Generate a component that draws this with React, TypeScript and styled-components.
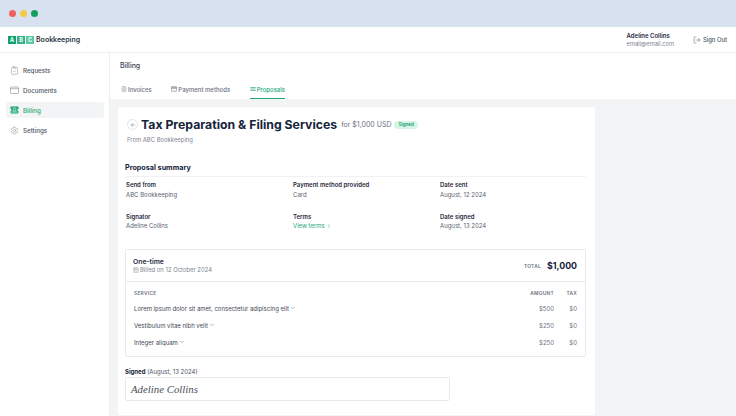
import React from 'react';
import styled, { createGlobalStyle } from 'styled-components';
import { ArrowLeft, ChevronDown, ChevronRight, ClipboardCheck, CalendarDays, FileText, LogOut, Settings } from 'lucide-react';

const Global = createGlobalStyle`
    html, body { margin:0; padding:0; background:#fff; }
    body { font-family:Inter, "Liberation Sans", sans-serif; color:#1f2a3c; width:736px; height:416px; overflow:hidden; }
`

const Page = styled.div`
    width:736px;
    height:416px;
    display:flex;
    flex-direction:column;
    overflow:hidden;
`

const TitleBar = styled.div`
    height:27px;
    flex:none;
    background:#d8e1ef;
    display:flex;
    align-items:center;
    gap:4px;
    padding:0 0 0 9px;
    box-sizing:border-box;
`

const Dot = styled.span<{ $color: string }>`
    width:7px;
    height:7px;
    border-radius:50%;
    background:${props => props.$color};
`

const Header = styled.header`
    height:26px;
    flex:none;
    display:flex;
    align-items:center;
    border-bottom:1px solid #eceef0;
    padding:0 9px 0 8px;
    box-sizing:border-box;
`

const Logo = styled.div`
    display:flex;
    align-items:center;
    gap:2px;
    font-size:7px;
    font-weight:600;
    color:#2a3546;
    flex:1;
`

const LogoLetters = styled.div`
    display:flex;
    gap:1px;
`

const LogoLetter = styled.span<{ $color: string }>`
    width:8px;
    height:8px;
    background:${props => props.$color};
    color:#fff;
    font-size:5.5px;
    font-weight:700;
    display:flex;
    align-items:center;
    justify-content:center;
`

const User = styled.div`
    display:flex;
    flex-direction:column;
    font-size:6px;
    line-height:8px;
    margin-right:19px;
`

const UserName = styled.span`
    font-weight:600;
    color:#1f2a3c;
`

const UserMail = styled.span`
    font-size:5.7px;
    color:#7d8590;
`

const SignOut = styled.div`
    display:flex;
    align-items:center;
    gap:2px;
    font-size:5.9px;
    font-weight:500;
    color:#4b5563;
`

const Body = styled.div`
    flex:1;
    display:flex;
    min-height:0;
`

const Sidebar = styled.nav`
    width:110px;
    flex:none;
    border-right:1px solid #eceef0;
    box-sizing:border-box;
    padding:9px 5px 0 6px;
    display:flex;
    flex-direction:column;
    gap:4px;
`

const NavItem = styled.div<{ $active?: boolean }>`
    height:16px;
    display:flex;
    align-items:center;
    gap:4px;
    padding:0 4px;
    border-radius:3px;
    font-size:6.2px;
    font-weight:500;
    color:${props => props.$active ? '#1fa874' : '#4b5563'};
    background:${props => props.$active ? '#f3f4f5' : 'transparent'};
`

const Main = styled.main`
    flex:1;
    display:flex;
    flex-direction:column;
    min-width:0;
`

const MainTop = styled.div`
    height:46px;
    flex:none;
    box-sizing:border-box;
    padding:8px 0 0 10px;
    display:flex;
    flex-direction:column;
`

const PageTitle = styled.div`
    font-size:7px;
    font-weight:500;
    line-height:10px;
    color:#374151;
`

const Tabs = styled.div`
    display:flex;
    gap:19.5px;
    margin-top:auto;
    padding-left:1px;
`

const Tab = styled.div<{ $active?: boolean }>`
    height:18px;
    display:flex;
    align-items:center;
    gap:1px;
    padding-bottom:1px;
    box-sizing:border-box;
    font-size:6px;
    font-weight:500;
    color:${props => props.$active ? '#22a87a' : '#6b7280'};
    border-bottom:1px solid ${props => props.$active ? '#22a87a' : 'transparent'};
`

const Content = styled.div`
    flex:1;
    background:#f3f4f5;
    padding:8px 8px 0;
    min-height:0;
`

const Card = styled.section`
    width:477px;
    height:308px;
    box-sizing:border-box;
    background:#fff;
    border-radius:2px;
    padding:9px 9px 0 7px;
`

const TitleRow = styled.div`
    display:flex;
    align-items:center;
    padding-left:2px;
`

const BackButton = styled.span`
    width:11px;
    height:11px;
    border-radius:50%;
    border:1px solid #e3e5e8;
    box-sizing:border-box;
    display:flex;
    align-items:center;
    justify-content:center;
    color:#4b5563;
    margin-right:3px;
`

const Title = styled.h1`
    margin:0;
    font-size:12.25px;
    line-height:17px;
    font-weight:700;
    color:#15243a;
`

const Price = styled.span`
    font-size:7px;
    color:#6b7280;
    margin-left:4px;
`

const Badge = styled.span`
    margin-left:3px;
    height:8px;
    padding:0 4px;
    border-radius:4px;
    background:#d6f5e6;
    color:#16a06c;
    font-size:4.6px;
    font-weight:600;
    display:flex;
    align-items:center;
`

const From = styled.div`
    margin-top:3px;
    font-size:5.9px;
    line-height:8px;
    color:#7d8590;
    padding-left:2px;
`

const SectionTitle = styled.h2`
    margin:19px 0 0;
    font-size:7.2px;
    line-height:10px;
    font-weight:700;
    color:#15243a;
    padding-bottom:3px;
    border-bottom:1px solid #f0f1f3;
`

const Summary = styled.div`
    display:grid;
    grid-template-columns:167px 147px 1fr;
    row-gap:14px;
    padding:4px 0 0 1px;
`

const Field = styled.div`
    display:flex;
    flex-direction:column;
    gap:1.5px;
    font-size:6px;
    line-height:8px;
`

const FieldLabel = styled.span`
    font-weight:600;
    color:#1f2a3c;
`

const FieldValue = styled.span<{ $link?: boolean }>`
    color:${props => props.$link ? '#22a87a' : '#5b6470'};
    display:flex;
    align-items:center;
    gap:1px;
`

const Box = styled.div`
    margin-top:19px;
    width:461px;
    height:108px;
    box-sizing:border-box;
    border:1px solid #e8eaed;
    border-radius:2px;
`

const BoxHead = styled.div`
    height:32px;
    box-sizing:border-box;
    border-bottom:1px solid #e8eaed;
    padding:0 8px 0 7px;
    display:flex;
    align-items:center;
    justify-content:space-between;
`

const BoxName = styled.div`
    font-size:6.8px;
    line-height:9px;
    font-weight:600;
    color:#1f2a3c;
`

const BoxDate = styled.div`
    font-size:5.9px;
    line-height:8px;
    color:#7d8590;
    display:flex;
    align-items:center;
    gap:1px;
`

const Total = styled.div`
    display:flex;
    align-items:center;
    gap:6px;
`

const TotalLabel = styled.span`
    font-size:4.8px;
    letter-spacing:0.3px;
    font-weight:600;
    color:#6b7280;
`

const TotalValue = styled.span`
    font-size:8.8px;
    font-weight:700;
    color:#15243a;
`

const Table = styled.div`
    padding:7px 8px 0;
`

const Row = styled.div`
    display:grid;
    grid-template-columns:1fr 40px 23px;
    align-items:center;
    height:17px;
    font-size:6px;
    color:#3f4854;
`

const HeadRow = styled(Row)`
    height:8px;
    margin-bottom:2.5px;
    font-size:4.8px;
    letter-spacing:0.3px;
    font-weight:600;
    color:#6b7280;
`

const Service = styled.span`
    display:flex;
    align-items:center;
    gap:1px;
`

const Cell = styled.span`
    text-align:right;
    color:#6b7280;
`

const SignedLabel = styled.div`
    margin-top:11px;
    font-size:6px;
    line-height:8px;
    color:#4b5563;
    & b { font-weight:700; color:#15243a; }
`

const SignatureBox = styled.div`
    margin-top:1px;
    width:325px;
    height:24px;
    box-sizing:border-box;
    border:1px solid #e8eaed;
    border-radius:2px;
    padding-left:5px;
    display:flex;
    align-items:center;
    font-family:"Liberation Serif", serif;
    font-style:italic;
    font-size:10.8px;
    color:#4a4f58;
`

// the green ticket shaped icon of the active nav item
const BillingIcon = () => (
    <svg width="9" height="8" viewBox="0 0 18 16">
        <path d="M1 1h16v5a2 2 0 0 0 0 4v3a2 2 0 0 1-2 2H3a2 2 0 0 1-2-2v-3a2 2 0 0 0 0-4z" fill="#1fa874" />
        <circle cx="9" cy="7" r="3" fill="none" stroke="#d6f5e6" strokeWidth="1.5" />
        <path d="M3 12h12" stroke="#d6f5e6" strokeWidth="1.5" />
    </svg>
);

const DocumentsIcon = () => (
    <svg width="9" height="8" viewBox="0 0 18 16" fill="none" stroke="#8a919b" strokeWidth="1.3">
        <rect x="1" y="2" width="16" height="13" rx="1.5" />
        <path d="M1 5.5h16" />
    </svg>
);

const CardIcon = () => (
    <svg width="6" height="6" viewBox="0 0 12 12" fill="none" stroke="#6b7280" strokeWidth="1.2">
        <rect x="0.6" y="1.5" width="10.8" height="9" rx="1" />
        <path d="M0.6 4h10.8" strokeWidth="2" />
    </svg>
);

const LinesIcon = () => (
    <svg width="6" height="6" viewBox="0 0 12 12" fill="none" stroke="#22a87a" strokeWidth="1.3">
        <path d="M0.5 3h11M0.5 6h11M0.5 9h11" />
    </svg>
);

const rows = [
    { name: 'Lorem ipsum dolor sit amet, consectetur adipiscing elit', amount: '$500' },
    { name: 'Vestibulum vitae nibh velit', amount: '$250' },
    { name: 'Integer aliquam', amount: '$250' },
];

const App = () => (
    <Page>
        <Global />
        <TitleBar>
            <Dot $color="#ee5f5f" />
            <Dot $color="#f6c945" />
            <Dot $color="#12a05c" />
        </TitleBar>
        <Header>
            <Logo>
                <LogoLetters>
                    <LogoLetter $color="#12a26b">A</LogoLetter>
                    <LogoLetter $color="#2fb583">B</LogoLetter>
                    <LogoLetter $color="#58c9a0">C</LogoLetter>
                </LogoLetters>
                Bookkeeping
            </Logo>
            <User>
                <UserName>Adeline Collins</UserName>
                <UserMail>email@email.com</UserMail>
            </User>
            <SignOut><LogOut size={8} strokeWidth={1.4} />Sign Out</SignOut>
        </Header>
        <Body>
            <Sidebar>
                <NavItem><ClipboardCheck size={9} strokeWidth={1.4} color="#8a919b" />Requests</NavItem>
                <NavItem><DocumentsIcon />Documents</NavItem>
                <NavItem $active><BillingIcon />Billing</NavItem>
                <NavItem><Settings size={9} strokeWidth={1.4} color="#8a919b" />Settings</NavItem>
            </Sidebar>
            <Main>
                <MainTop>
                    <PageTitle>Billing</PageTitle>
                    <Tabs>
                        <Tab><FileText size={6} strokeWidth={1.5} />Invoices</Tab>
                        <Tab><CardIcon />Payment methods</Tab>
                        <Tab $active><LinesIcon />Proposals</Tab>
                    </Tabs>
                </MainTop>
                <Content>
                    <Card>
                        <TitleRow>
                            <BackButton><ArrowLeft size={6} strokeWidth={1.5} /></BackButton>
                            <Title>Tax Preparation &amp; Filing Services</Title>
                            <Price>for $1,000 USD</Price>
                            <Badge>Signed</Badge>
                        </TitleRow>
                        <From>From ABC Bookkeeping</From>
                        <SectionTitle>Proposal summary</SectionTitle>
                        <Summary>
                            <Field><FieldLabel>Send from</FieldLabel><FieldValue>ABC Bookkeeping</FieldValue></Field>
                            <Field><FieldLabel>Payment method provided</FieldLabel><FieldValue>Card</FieldValue></Field>
                            <Field><FieldLabel>Date sent</FieldLabel><FieldValue>August, 12 2024</FieldValue></Field>
                            <Field><FieldLabel>Signator</FieldLabel><FieldValue>Adeline Collins</FieldValue></Field>
                            <Field><FieldLabel>Terms</FieldLabel><FieldValue $link>View terms <ChevronRight size={6} /></FieldValue></Field>
                            <Field><FieldLabel>Date signed</FieldLabel><FieldValue>August, 13 2024</FieldValue></Field>
                        </Summary>
                        <Box>
                            <BoxHead>
                                <div>
                                    <BoxName>One-time</BoxName>
                                    <BoxDate><CalendarDays size={6} strokeWidth={1.5} />Billed on 12 October 2024</BoxDate>
                                </div>
                                <Total>
                                    <TotalLabel>TOTAL</TotalLabel>
                                    <TotalValue>$1,000</TotalValue>
                                </Total>
                            </BoxHead>
                            <Table>
                                <HeadRow>
                                    <span>SERVICE</span>
                                    <Cell>AMOUNT</Cell>
                                    <Cell>TAX</Cell>
                                </HeadRow>
                                {rows.map(row => (
                                    <Row key={row.name}>
                                        <Service>{row.name} <ChevronDown size={6} strokeWidth={1.5} /></Service>
                                        <Cell>{row.amount}</Cell>
                                        <Cell>$0</Cell>
                                    </Row>
                                ))}
                            </Table>
                        </Box>
                        <SignedLabel><b>Signed</b> (August, 13 2024)</SignedLabel>
                        <SignatureBox>Adeline Collins</SignatureBox>
                    </Card>
                </Content>
            </Main>
        </Body>
    </Page>
);

export default App;
